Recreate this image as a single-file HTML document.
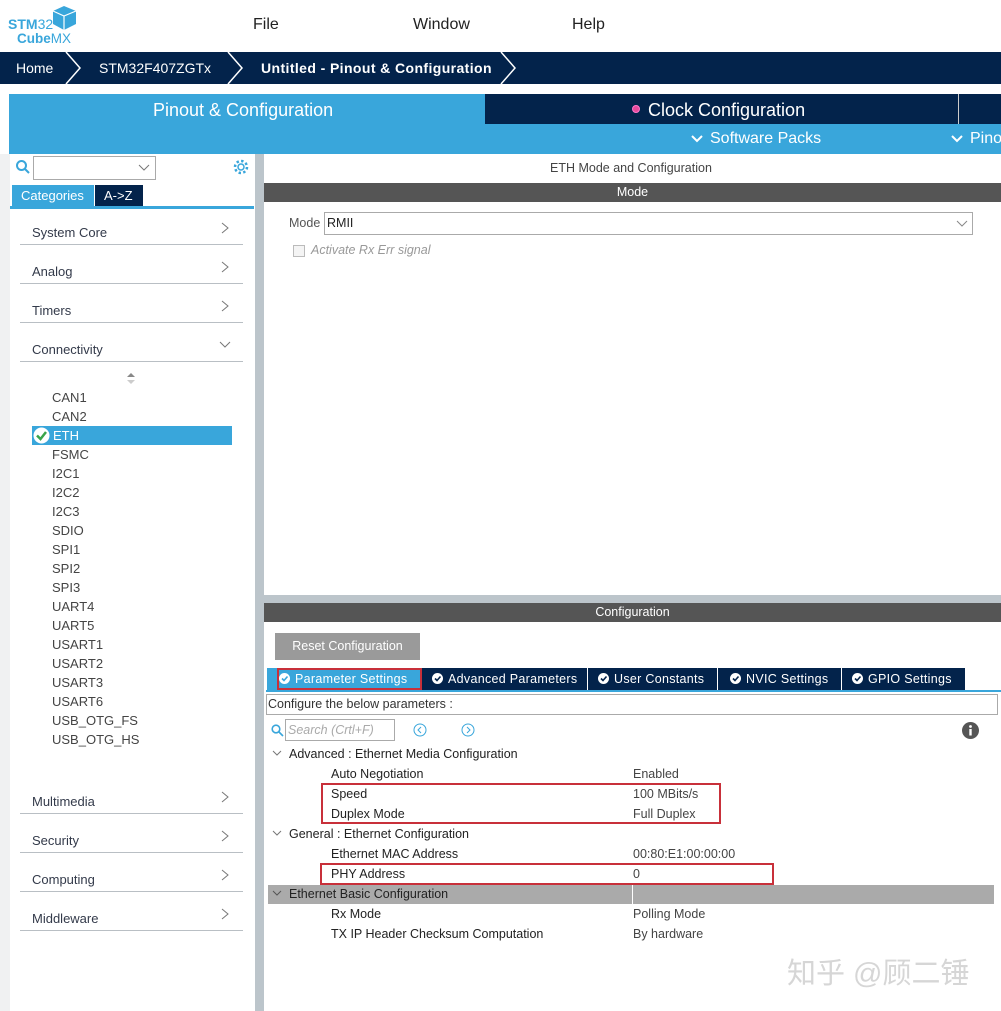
<!DOCTYPE html>
<html><head><meta charset="utf-8"><style>
*{margin:0;padding:0;box-sizing:border-box}
body{width:1001px;height:1011px;position:relative;overflow:hidden;background:#fff;font-family:"Liberation Sans","Noto Sans CJK SC",sans-serif;color:#333}
.a{position:absolute;white-space:nowrap}
.navy{background:#03234b}
.blue{background:#39a6db}
.cat{position:absolute;left:20px;width:223px;height:39px;border-bottom:1px solid #b9bfc4;font-size:13px;color:#333a4a}
.cat span{position:absolute;left:12px;bottom:4px}
.cat svg{position:absolute;right:14px;bottom:10px}
.it{position:absolute;left:52px;font-size:13px;color:#444}
.row{position:absolute;font-size:12.5px;color:#222}
.chk{display:inline-block;vertical-align:-1px;margin-right:5px}
.tab{position:absolute;top:668px;height:22px;color:#fff;font-size:12.5px;line-height:22px;padding-left:12px;letter-spacing:0.3px}
</style></head><body>
<!-- header -->
<div class="a" style="left:8px;top:17px;font-weight:bold;font-size:14px;color:#39a6db;line-height:14px">STM<span style="font-weight:normal">32</span></div>
<div class="a" style="left:17px;top:32px;font-weight:bold;font-size:13.5px;color:#39a6db;line-height:14px">Cube<span style="font-weight:normal">MX</span></div>
<svg class="a" style="left:52px;top:5px" width="25" height="26" viewBox="0 0 25 26"><path d="M12 1 L24 6 L24 19 L12 25 L1 19 L1 6 Z" fill="#39a6db"/><path d="M1 6 L12 11 L24 6 M12 11 L12 25" stroke="#fff" stroke-width="1.2" fill="none"/></svg>
<div class="a" style="left:253px;top:16px;font-size:16px;color:#222">File</div>
<div class="a" style="left:413px;top:16px;font-size:16px;color:#222">Window</div>
<div class="a" style="left:572px;top:16px;font-size:16px;color:#222">Help</div>
<!-- breadcrumb -->
<div class="a navy" style="left:0;top:52px;width:1001px;height:32px"></div>
<svg class="a" style="left:0;top:52px" width="1001" height="32"><g stroke="#fff" stroke-width="1.5" fill="none"><path d="M66 0 L80 16 L66 32"/><path d="M228 0 L242 16 L228 32"/><path d="M501 0 L515 16 L501 32"/></g></svg>
<div class="a" style="left:16px;top:60px;font-size:14px;color:#fff">Home</div>
<div class="a" style="left:99px;top:60px;font-size:14px;color:#fff">STM32F407ZGTx</div>
<div class="a" style="left:261px;top:60px;font-size:14px;color:#fff;font-weight:bold;letter-spacing:0.4px">Untitled - Pinout &amp; Configuration</div>
<!-- tabs -->
<div class="a blue" style="left:9px;top:94px;width:992px;height:60px"></div>
<div class="a navy" style="left:485px;top:94px;width:516px;height:30px"></div>
<div class="a" style="left:958px;top:94px;width:1px;height:30px;background:#ccc"></div>
<div class="a" style="left:153px;top:100px;font-size:18px;color:#fff">Pinout &amp; Configuration</div>
<div class="a" style="left:632px;top:105px;width:8px;height:8px;border-radius:50%;background:#e64a9a;border:1.5px solid #f7c"></div>
<div class="a" style="left:648px;top:100px;font-size:18px;color:#fff">Clock Configuration</div>
<svg class="a" style="left:690px;top:134px" width="14" height="10"><path d="M2 2 L7 7 L12 2" stroke="#fff" stroke-width="2" fill="none"/></svg>
<div class="a" style="left:710px;top:130px;font-size:16px;color:#fff">Software Packs</div>
<svg class="a" style="left:950px;top:134px" width="14" height="10"><path d="M2 2 L7 7 L12 2" stroke="#fff" stroke-width="2" fill="none"/></svg>
<div class="a" style="left:970px;top:130px;font-size:16px;color:#fff">Pinout</div>
<!-- left panel -->
<div class="a" style="left:0;top:154px;width:10px;height:857px;background:#f0f1f2"></div>
<div class="a" style="left:255px;top:154px;width:9px;height:857px;background:#bcc5cb"></div>
<svg class="a" style="left:15px;top:159px" width="16" height="16"><circle cx="6.5" cy="6.5" r="4.5" stroke="#39a6db" stroke-width="2" fill="none"/><path d="M10 10 L14 14" stroke="#39a6db" stroke-width="2"/></svg>
<div class="a" style="left:33px;top:156px;width:123px;height:24px;border:1px solid #aaa;background:#fff"></div>
<svg class="a" style="left:138px;top:164px" width="12" height="8"><path d="M1 1 L6 6 L11 1" stroke="#777" fill="none"/></svg>
<svg class="a" style="left:232px;top:158px" width="18" height="18" viewBox="0 0 18 18"><circle cx="9" cy="9" r="3" stroke="#39a6db" stroke-width="1.5" fill="none"/><circle cx="9" cy="9" r="6" stroke="#39a6db" stroke-width="2.5" fill="none" stroke-dasharray="2.4 2.3"/></svg>
<div class="a blue" style="left:12px;top:185px;width:82px;height:21px;color:#fff;font-size:13px;line-height:21px;padding-left:9px">Categories</div>
<div class="a navy" style="left:95px;top:185px;width:48px;height:21px;color:#fff;font-size:13px;line-height:21px;padding-left:9px">A-&gt;Z</div>
<div class="a" style="left:10px;top:206px;width:244px;height:3px;background:#39a6db"></div>
<div class="cat" style="top:206px"><span>System Core</span><svg width="8" height="12"><path d="M1 1 L7 6 L1 11" stroke="#777" fill="none"/></svg></div>
<div class="cat" style="top:245px"><span>Analog</span><svg width="8" height="12"><path d="M1 1 L7 6 L1 11" stroke="#777" fill="none"/></svg></div>
<div class="cat" style="top:284px"><span>Timers</span><svg width="8" height="12"><path d="M1 1 L7 6 L1 11" stroke="#777" fill="none"/></svg></div>
<div class="cat" style="top:323px"><span>Connectivity</span><svg width="12" height="8" style="bottom:12px;right:12px"><path d="M1 1 L6 6 L11 1" stroke="#777" fill="none"/></svg></div>
<svg class="a" style="left:127px;top:373px" width="8" height="11"><path d="M4 0 L8 4 L0 4Z" fill="#888"/><path d="M0 7 L8 7 L4 11Z" fill="#ccc"/></svg>
<div class="it" style="top:390px">CAN1</div>
<div class="it" style="top:409px">CAN2</div>
<div class="a blue" style="left:32px;top:426px;width:200px;height:19px"></div>
<svg class="a" style="left:33px;top:427px" width="17" height="17"><circle cx="8.5" cy="8.5" r="8" fill="#fff"/><path d="M4 8.5 L7.5 12 L13 5" stroke="#3aa44a" stroke-width="2.5" fill="none"/></svg>
<div class="it" style="top:428px;color:#fff;left:53px">ETH</div>
<div class="it" style="top:447px">FSMC</div>
<div class="it" style="top:466px">I2C1</div>
<div class="it" style="top:485px">I2C2</div>
<div class="it" style="top:504px">I2C3</div>
<div class="it" style="top:523px">SDIO</div>
<div class="it" style="top:542px">SPI1</div>
<div class="it" style="top:561px">SPI2</div>
<div class="it" style="top:580px">SPI3</div>
<div class="it" style="top:599px">UART4</div>
<div class="it" style="top:618px">UART5</div>
<div class="it" style="top:637px">USART1</div>
<div class="it" style="top:656px">USART2</div>
<div class="it" style="top:675px">USART3</div>
<div class="it" style="top:694px">USART6</div>
<div class="it" style="top:713px">USB_OTG_FS</div>
<div class="it" style="top:732px">USB_OTG_HS</div>
<div class="cat" style="top:775px"><span>Multimedia</span><svg width="8" height="12"><path d="M1 1 L7 6 L1 11" stroke="#777" fill="none"/></svg></div>
<div class="cat" style="top:814px"><span>Security</span><svg width="8" height="12"><path d="M1 1 L7 6 L1 11" stroke="#777" fill="none"/></svg></div>
<div class="cat" style="top:853px"><span>Computing</span><svg width="8" height="12"><path d="M1 1 L7 6 L1 11" stroke="#777" fill="none"/></svg></div>
<div class="cat" style="top:892px"><span>Middleware</span><svg width="8" height="12"><path d="M1 1 L7 6 L1 11" stroke="#777" fill="none"/></svg></div>
<!-- right top -->
<div class="a" style="left:550px;top:161px;font-size:12.5px;color:#444">ETH Mode and Configuration</div>
<div class="a" style="left:264px;top:183px;width:737px;height:19px;background:#555;color:#fff;font-size:12.5px;line-height:19px;text-align:center">Mode</div>
<div class="a" style="left:289px;top:216px;font-size:12.5px;color:#555">Mode</div>
<div class="a" style="left:324px;top:212px;width:649px;height:23px;border:1px solid #aaa;font-size:12.5px;line-height:21px;padding-left:2px;color:#222">RMII</div>
<svg class="a" style="left:956px;top:220px" width="12" height="8"><path d="M1 1 L6 6 L11 1" stroke="#888" fill="none"/></svg>
<div class="a" style="left:293px;top:245px;width:12px;height:12px;border:1px solid #bbb;background:#f4f4f4"></div>
<div class="a" style="left:311px;top:243px;font-size:12.5px;color:#999;font-style:italic">Activate Rx Err signal</div>
<div class="a" style="left:264px;top:595px;width:737px;height:8px;background:#bcc5cb"></div>
<!-- config -->
<div class="a" style="left:264px;top:603px;width:737px;height:19px;background:#555;color:#fff;font-size:12.5px;line-height:19px;text-align:center">Configuration</div>
<div class="a" style="left:275px;top:633px;width:145px;height:27px;background:#9a9a9a;color:#fff;font-size:12.5px;line-height:27px;text-align:center">Reset Configuration</div>
<div class="tab blue" style="left:267px;width:155px;padding-left:12px"><span style="position:absolute;left:10px;top:0;width:145px;height:22px;border:2px solid #c8303a"></span><svg class="chk" width="11" height="11"><circle cx="5.5" cy="5.5" r="5.5" fill="#fff"/><path d="M3 5.5 L5 7.5 L8.5 3.5" stroke="#39a6db" stroke-width="1.6" fill="none"/></svg>Parameter Settings</div>
<div class="tab navy" style="left:422px;width:165px;padding-left:10px"><svg class="chk" width="11" height="11"><circle cx="5.5" cy="5.5" r="5.5" fill="#fff"/><path d="M3 5.5 L5 7.5 L8.5 3.5" stroke="#03234b" stroke-width="1.6" fill="none"/></svg>Advanced Parameters</div>
<div class="tab navy" style="left:588px;width:129px;padding-left:10px"><svg class="chk" width="11" height="11"><circle cx="5.5" cy="5.5" r="5.5" fill="#fff"/><path d="M3 5.5 L5 7.5 L8.5 3.5" stroke="#03234b" stroke-width="1.6" fill="none"/></svg>User Constants</div>
<div class="tab navy" style="left:718px;width:123px;padding-left:12px"><svg class="chk" width="11" height="11"><circle cx="5.5" cy="5.5" r="5.5" fill="#fff"/><path d="M3 5.5 L5 7.5 L8.5 3.5" stroke="#03234b" stroke-width="1.6" fill="none"/></svg>NVIC Settings</div>
<div class="tab navy" style="left:842px;width:123px;padding-left:10px"><svg class="chk" width="11" height="11"><circle cx="5.5" cy="5.5" r="5.5" fill="#fff"/><path d="M3 5.5 L5 7.5 L8.5 3.5" stroke="#03234b" stroke-width="1.6" fill="none"/></svg>GPIO Settings</div>
<div class="a" style="left:266px;top:690px;width:735px;height:2px;background:#39a6db"></div>
<div class="a" style="left:266px;top:694px;width:732px;height:21px;border:1px solid #aaa;font-size:12.5px;line-height:19px;padding-left:1px;color:#333">Configure the below parameters :</div>
<svg class="a" style="left:271px;top:724px" width="13" height="13"><circle cx="5" cy="5" r="3.8" stroke="#39a6db" stroke-width="1.6" fill="none"/><path d="M8 8 L12 12" stroke="#39a6db" stroke-width="1.6"/></svg>
<div class="a" style="left:285px;top:719px;width:110px;height:22px;border:1px solid #aaa;font-size:12.5px;line-height:20px;padding-left:2px;color:#aaa;font-style:italic">Search (Crtl+F)</div>
<svg class="a" style="left:413px;top:723px" width="14" height="14"><circle cx="7" cy="7" r="6" stroke="#39a6db" fill="none"/><path d="M8 4 L5 7 L8 10" stroke="#39a6db" fill="none"/></svg>
<svg class="a" style="left:461px;top:723px" width="14" height="14"><circle cx="7" cy="7" r="6" stroke="#39a6db" fill="none"/><path d="M6 4 L9 7 L6 10" stroke="#39a6db" fill="none"/></svg>
<svg class="a" style="left:962px;top:722px" width="17" height="17"><circle cx="8.5" cy="8.5" r="8.5" fill="#555"/><rect x="7.3" y="7" width="2.4" height="6.5" fill="#fff"/><circle cx="8.5" cy="4.5" r="1.4" fill="#fff"/></svg>
<svg class="a" style="left:272px;top:750px" width="10" height="8"><path d="M1 1 L5 5 L9 1" stroke="#777" fill="none"/></svg>
<div class="row" style="left:289px;top:747px">Advanced : Ethernet Media Configuration</div>
<div class="row" style="left:331px;top:767px">Auto Negotiation</div><div class="row" style="left:633px;top:767px;color:#444">Enabled</div>
<div class="row" style="left:331px;top:787px">Speed</div><div class="row" style="left:633px;top:787px;color:#444">100 MBits/s</div>
<div class="row" style="left:331px;top:807px">Duplex Mode</div><div class="row" style="left:633px;top:807px;color:#444">Full Duplex</div>
<div class="a" style="left:321px;top:783px;width:400px;height:41px;border:2px solid #c8303a"></div>
<svg class="a" style="left:272px;top:830px" width="10" height="8"><path d="M1 1 L5 5 L9 1" stroke="#777" fill="none"/></svg>
<div class="row" style="left:289px;top:827px">General : Ethernet Configuration</div>
<div class="row" style="left:331px;top:847px">Ethernet MAC Address</div><div class="row" style="left:633px;top:847px;color:#444">00:80:E1:00:00:00</div>
<div class="row" style="left:331px;top:867px">PHY Address</div><div class="row" style="left:633px;top:867px;color:#444">0</div>
<div class="a" style="left:320px;top:863px;width:454px;height:22px;border:2px solid #c8303a"></div>
<div class="a" style="left:268px;top:885px;width:726px;height:19px;background:#aaa"></div>
<div class="a" style="left:632px;top:885px;width:1px;height:19px;background:#fff"></div>
<svg class="a" style="left:272px;top:890px" width="10" height="8"><path d="M1 1 L5 5 L9 1" stroke="#555" fill="none"/></svg>
<div class="row" style="left:289px;top:887px">Ethernet Basic Configuration</div>
<div class="row" style="left:331px;top:907px">Rx Mode</div><div class="row" style="left:633px;top:907px;color:#444">Polling Mode</div>
<div class="row" style="left:331px;top:927px">TX IP Header Checksum Computation</div><div class="row" style="left:633px;top:927px;color:#444">By hardware</div>
<div class="a" style="left:787px;top:950px;font-size:29px;color:#d6d6d6">知乎 @顾二锤</div>
</body></html>
